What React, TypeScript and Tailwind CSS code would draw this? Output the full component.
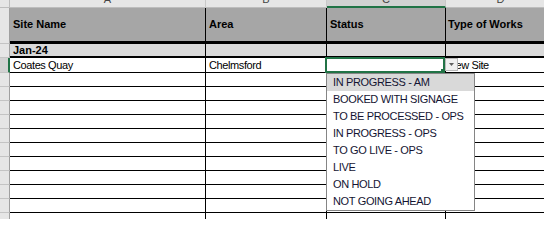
import React from "react";

const statuses = [
  "IN PROGRESS - AM",
  "BOOKED WITH SIGNAGE",
  "TO BE PROCESSED - OPS",
  "IN PROGRESS - OPS",
  "TO GO LIVE - OPS",
  "LIVE",
  "ON HOLD",
  "NOT GOING AHEAD",
];

// one grid row: row-number strip + four cells
function Row({
  h,
  line,
  bg = "bg-white",
  strip = "bg-[#e6e6e6] border-r border-r-[#a0a0a0]",
  cells = ["", "", "", ""],
  bold = false,
}: {
  h: string;
  line: string;
  bg?: string;
  strip?: string;
  cells?: React.ReactNode[];
  bold?: boolean;
}) {
  const widths = ["w-[196px]", "w-[121px]", "w-[119px]", "w-[110px]"];
  const pads = ["pl-[3px]", "pl-[3px]", "pl-[3px]", "pl-[2px]"];
  return (
    <div className={`flex shrink-0 ${h}`}>
      <div className={`w-[10px] shrink-0 h-full border-b border-b-[#c4c4c4] ${strip}`} />
      <div className={`flex h-full ${line} border-black ${bg}`}>
        {cells.map((c, i) => (
          <div
            key={i}
            className={`shrink-0 h-full border-r border-black flex items-center overflow-hidden whitespace-nowrap ${widths[i]} ${pads[i]} ${
              bold ? "font-bold text-[11px]" : "text-[11px] tracking-[-0.4px]"
            }`}
          >
            {c}
          </div>
        ))}
      </div>
    </div>
  );
}

export default function App() {
  const letters = ["A", "B", "C", "D"];
  const letterW = ["w-[196px]", "w-[121px]", "w-[119px]", "w-[110px]"];

  return (
    <div className="relative w-[544px] h-[219px] overflow-hidden bg-white text-black font-['Liberation_Sans',Arial,sans-serif]">
      {/* column letters */}
      <div className="flex h-[8px]">
        <div className="w-[10px] shrink-0 h-full bg-[#e6e6e6] border-r border-b border-[#bdbdbd]" />
        {letters.map((l, i) => (
          <div
            key={l}
            className={`shrink-0 h-full overflow-hidden border-r border-r-[#c8c8c8] ${letterW[i]} ${
              l === "C" ? "bg-[#d2d2d2] border-b-2 border-b-[#217346]" : "bg-[#e6e6e6] border-b border-b-[#bdbdbd]"
            }`}
          >
            <div className="mt-[-8px] text-center text-[11px] leading-[14px] text-[#444]">{l}</div>
          </div>
        ))}
      </div>

      <Row
        h="h-[36px]"
        line="border-b-[3px]"
        bg="bg-[#a6a6a6]"
        bold
        cells={["Site Name", "Area", "Status", "Type of Works"]}
      />
      <Row h="h-[14px]" line="border-b-2" bg="bg-[#d9d9d9]" bold cells={["Jan-24", "", "", ""]} />
      <Row
        h="h-[15px]"
        line="border-b"
        strip="bg-[#d2d2d2] border-r-2 border-r-[#217346]"
        cells={["Coates Quay", "Chelmsford", "", "New Site"]}
      />
      {Array.from({ length: 11 }).map((_, i) => (
        <Row key={i} h="h-[14px]" line="border-b" />
      ))}

      {/* active cell */}
      <div className="absolute left-[325px] top-[57px] w-[120px] h-[16px] border-2 border-[#217346]" />
      <div className="absolute left-[441px] top-[69px] w-[4px] h-[4px] bg-[#217346]" />

      {/* validation dropdown button */}
      <div className="absolute left-[445px] top-[58px] w-[13px] h-[13px] bg-[#f0f0f0] border border-[#b9b9b9] flex items-center justify-center">
        <svg width="5" height="3" viewBox="0 0 5 3">
          <path d="M0 0h5L2.5 3z" fill="#606060" />
        </svg>
      </div>

      {/* validation list */}
      <div className="absolute left-[326px] top-[73px] w-[149px] border border-[#858585] bg-white">
        {statuses.map((s, i) => (
          <div
            key={s}
            className={`h-[17px] flex items-center pl-[6px] text-[11px] tracking-[-0.35px] text-[#141432] whitespace-nowrap ${
              i === 0 ? "bg-[#d9d9d9]" : ""
            }`}
          >
            {s}
          </div>
        ))}
      </div>
    </div>
  );
}
